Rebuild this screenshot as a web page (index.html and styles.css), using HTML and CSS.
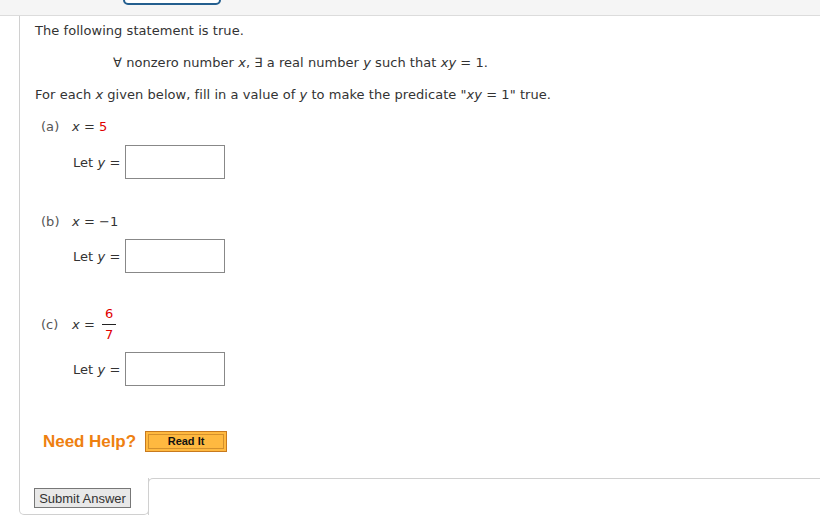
FILE: index.html
```html
<!DOCTYPE html>
<html lang="en">

<head>
  <meta charset="UTF-8">
  <meta name="viewport" content="width=device-width, initial-scale=1.0">
  <title>Question</title>
  <link rel="stylesheet" href="styles.css">
</head>

<body>

  <div class="topbar">
    <div class="top-btn"></div>
  </div>

  <div class="card">
    <div class="question">
      <p class="line">The following statement is true.</p>
      <p class="line statement">∀ nonzero number <i>x</i>, ∃ a real number <i>y</i> such that <i>xy</i> = 1.</p>
      <p class="line">For each <i>x</i> given below, fill in a value of <i>y</i> to make the predicate "<i>xy</i> = 1" true.</p>

      <div class="part first">
        <div class="part-head"><span class="part-label">(a)</span><i>x</i>&nbsp;=&nbsp;<span class="red">5</span></div>
        <div class="answer"><span>Let <i>y</i> =</span><input type="text" class="box"></div>
      </div>

      <div class="part">
        <div class="part-head"><span class="part-label">(b)</span><i>x</i>&nbsp;=&nbsp;−1</div>
        <div class="answer"><span>Let <i>y</i> =</span><input type="text" class="box"></div>
      </div>

      <div class="part">
        <div class="part-head tall"><span class="part-label">(c)</span><i>x</i>&nbsp;=&nbsp;
          <span class="frac"><span class="num red">6</span><span class="den red">7</span></span>
        </div>
        <div class="answer close"><span>Let <i>y</i> =</span><input type="text" class="box"></div>
      </div>

      <div class="help">
        <span class="help-text">Need Help?</span>
        <button class="read-btn"><span>Read It</span></button>
      </div>
    </div>

    <div class="footer">
      <div class="submit-tab">
        <button class="submit-btn">Submit Answer</button>
      </div>
      <div class="footer-rest"></div>
    </div>
  </div>

</body>

</html>
```

FILE: styles.css
```css
* {
  margin: 0;
  padding: 0;
  box-sizing: border-box;
}

html,
body {
  width: 100%;
  height: 100%;
  background: #fff;
}

body {
  font-family: "DejaVu Sans", Verdana, sans-serif;
  font-size: 13px;
  color: #333;
  overflow: hidden;
}

.topbar {
  height: 16px;
  background: #f5f5f5;
  border-bottom: 1px solid #dcdcdc;
  overflow: hidden;
}

.top-btn {
  width: 98px;
  height: 24px;
  margin: -19px 0 0 123px;
  border: 2px solid #245f8f;
  border-radius: 5px;
  background: #fff;
}

.card {
  margin-left: 19px;
}

.question {
  border-left: 1px solid #d0d0d0;
  padding: 5px 0 26px 15px;
  letter-spacing: 0.05px;
}

.line {
  line-height: 20px;
  margin-bottom: 12px;
}

.statement {
  padding-left: 78px;
}

.red {
  color: #e00000;
}

.part {
  margin-top: 32px;
}

.part.first {
  margin-top: -1px;
}

.part-head {
  height: 20px;
  display: flex;
  align-items: center;
  padding-left: 6px;
}

.part-head.tall {
  height: 38px;
}

.part-label {
  width: 31px;
  color: #555;
}

.frac {
  display: inline-flex;
  flex-direction: column;
  align-items: center;
  margin-left: 3px;
}

.frac .num {
  line-height: 16px;
  padding: 0 3px 2px;
  border-bottom: 1px solid #222;
}

.frac .den {
  line-height: 17px;
  padding-top: 1px;
}

.answer {
  display: flex;
  align-items: center;
  margin-top: 8px;
  padding-left: 38px;
}

.part.first .answer {
  margin-top: 9px;
}

.answer.close {
  margin-top: 9px;
}

.box {
  width: 100px;
  height: 34px;
  margin-left: 5px;
  border: 1px solid #888;
  background: #fff;
}

.help {
  display: flex;
  align-items: center;
  margin-top: 45px;
  padding-left: 8px;
}

.help-text {
  font-family: "Liberation Sans", Arial, sans-serif;
  font-weight: bold;
  font-size: 17px;
  letter-spacing: -0.05px;
  color: #ee8010;
}

.read-btn {
  width: 82px;
  height: 21px;
  margin-left: 9px;
  padding: 2px;
  background: #ffb940;
  border: 1px solid #c87a1e;
  font-family: "Liberation Sans", Arial, sans-serif;
  font-weight: bold;
  font-size: 11px;
  color: #111;
}

.read-btn span {
  display: block;
  height: 100%;
  line-height: 13px;
  border: 1px solid #d4902c;
}

.footer {
  display: flex;
}

.submit-tab {
  width: 130px;
  height: 37px;
  padding: 10px 0 0 14px;
  border-left: 1px solid #d0d0d0;
  border-right: 1px solid #d0d0d0;
  border-bottom: 1px solid #d0d0d0;
  border-radius: 0 0 5px 5px;
}

.submit-btn {
  width: 97px;
  height: 20px;
  background: #e8e8e8;
  border: 1px solid #777;
  font-family: "Liberation Sans", Arial, sans-serif;
  font-size: 13px;
  color: #333;
}

.footer-rest {
  flex: 1;
  height: 37px;
  margin-left: -1px;
  border-top: 1px solid #d0d0d0;
  border-left: 1px solid #d0d0d0;
  border-top-left-radius: 5px;
}
```
